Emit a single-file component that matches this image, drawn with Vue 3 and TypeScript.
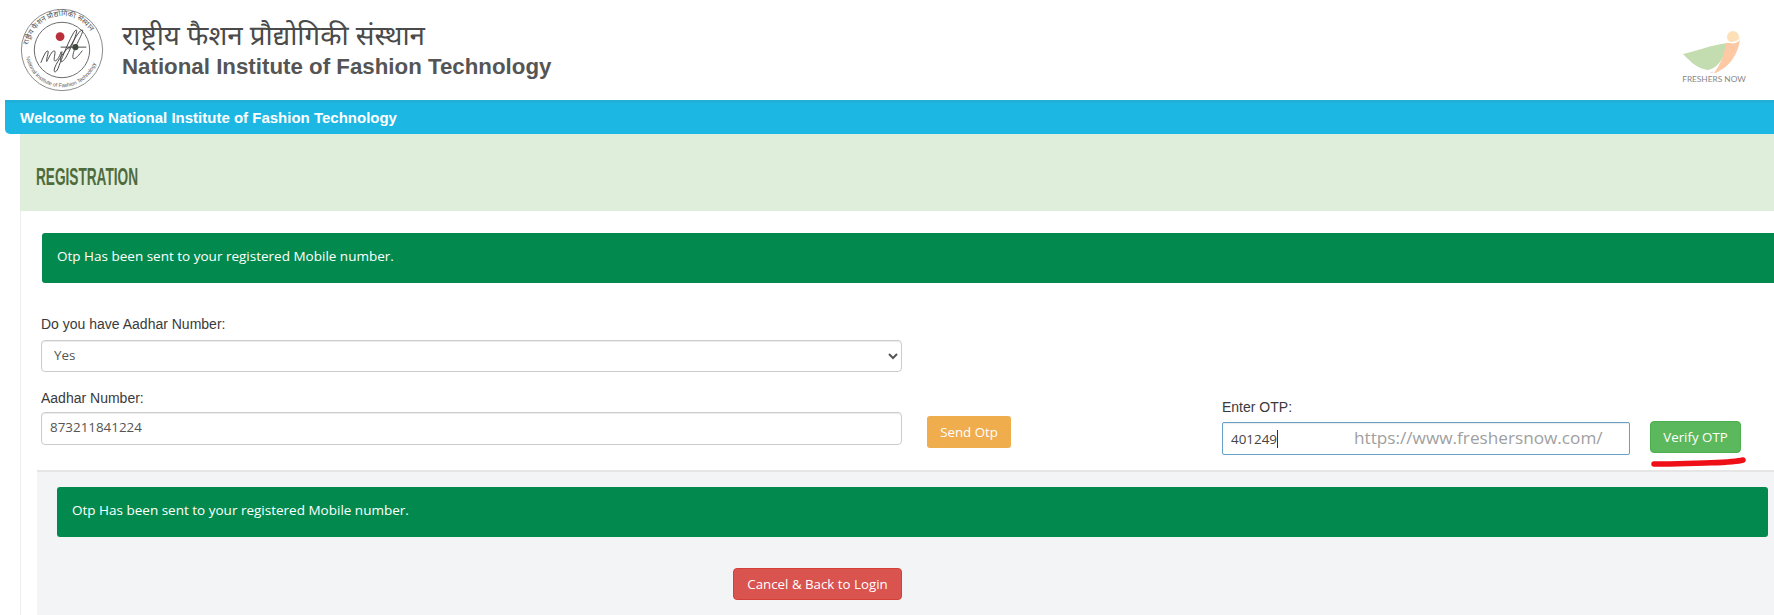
<script setup lang="ts">
const message: string = 'Otp Has been sent to your registered Mobile number.'
</script>

<template>
  <div class="page">
    <header class="top">
      <svg class="nift" viewBox="0 0 90 90" width="86" height="86" role="img" aria-label="NIFT logo">
        <defs>
          <path id="arcTop" d="M10 40 A35.5 35.5 0 0 1 80.5 42" />
          <path id="arcBot" d="M7.5 52 A38 38 0 0 0 82.5 52" />
        </defs>
        <circle cx="45" cy="45" r="42.5" fill="none" stroke="#666" stroke-width="0.8" />
        <circle cx="45" cy="45" r="29" fill="none" stroke="#555" stroke-width="0.9" />
        <text class="ring" font-size="7.8"><textPath href="#arcTop">राष्ट्रीय फैशन प्रौद्योगिकी संस्थान</textPath></text>
        <text class="ring" font-size="5.6"><textPath href="#arcBot">National Institute of Fashion Technology</textPath></text>
        <circle cx="43" cy="31" r="4.6" fill="#b8303c" />
        <circle cx="59" cy="42" r="3.2" fill="#3c4d3c" />
        <path d="M23 58c3-7 5-12 7-12 2 0-2 9-1 11 3-5 5-11 8-11 2 0-1 8 0 10 1 2 5-2 7-9M45 47c-1 4-2 9-1 10 1 1 4-2 6-6C56 40 62 24 60 24 57 24 46 50 41 64 39 69 36 69 37 65 38 60 46 48 52 42M52 44c4-6 10-19 14-20 2 0-1 6-5 14-3 6-6 14-4 16 2 1 6-4 9-8M44 42H70" fill="none" stroke="#444" stroke-width="1" stroke-linecap="round" />
      </svg>
      <div class="names">
        <div class="hindi">राष्ट्रीय फैशन प्रौद्योगिकी संस्थान</div>
        <div class="english">National Institute of Fashion Technology</div>
      </div>
      <div class="fn">
        <svg viewBox="0 0 62 50" width="62" height="50" aria-hidden="true">
          <path d="M0 31C14 28 28 22 44 20c-2 13-8 25-19 27C14 46 7 38 0 31z" fill="#c3dcb0" />
          <path d="M43 20c6 0 10-2 14-5-1 13-8 29-27 36 7-8 11-18 13-31z" fill="#fcc9a4" />
          <circle cx="50" cy="14" r="6" fill="#fde0b8" />
          <path d="M44 18c5 3 9 2 13-2" stroke="#fff" stroke-width="1.4" fill="none" />
          <path d="M18 54l12-5" stroke="#ddd" stroke-width="1" fill="none" />
        </svg>
        <span class="fn-text">FRESHERS NOW</span>
      </div>
    </header>

    <div class="bar">Welcome to National Institute of Fashion Technology</div>

    <main class="main">
      <div class="title-band"><h1 class="title">REGISTRATION</h1></div>

      <div class="alert alert-first">{{ message }}</div>

      <div class="form">
        <label class="label" for="has">Do you have Aadhar Number:</label>
        <select id="has" class="control select">
          <option>Yes</option>
        </select>

        <div class="row">
          <div class="aadhar">
            <label class="label" for="num">Aadhar Number:</label>
            <input id="num" class="control" value="873211841224" />
          </div>
          <button class="btn send" type="button">Send Otp</button>
          <div class="otp">
            <label class="label otp-label" for="otp">Enter OTP:</label>
            <div class="otp-field">
              <input id="otp" class="control focus" value="401249" />
              <span class="caret"></span>
              <span class="mark">https://www.freshersnow.com/</span>
            </div>
          </div>
          <div class="verify-wrap">
            <button class="btn verify" type="button">Verify OTP</button>
            <svg class="scribble" viewBox="0 0 98 10" width="98" height="10" aria-hidden="true">
              <path d="M3 7C25 7.4 40 6.4 60 5.8c12-.4 26-1 32-2.8" fill="none" stroke="#ee0f17" stroke-width="5.5" stroke-linecap="round" />
            </svg>
          </div>
        </div>
      </div>

      <section class="foot">
        <div class="alert alert-second">{{ message }}</div>
        <div class="foot-actions">
          <button class="btn cancel" type="button">Cancel &amp; Back to Login</button>
        </div>
      </section>
    </main>
  </div>
</template>

<style>
html, body { margin: 0; background: #fff; overflow: hidden; }
</style>

<style scoped>
.page {
  width: 1774px;
  height: 615px;
  overflow: hidden;
  font-family: "Open Sans", "Liberation Sans", sans-serif;
  color: #333;
}
.top {
  height: 100px;
  display: flex;
  align-items: flex-start;
  box-sizing: border-box;
  padding: 7px 0 0 19px;
}
.ring { font-family: "Liberation Sans", sans-serif; fill: #555; }
.names { margin-left: 17px; padding-top: 16px; }
.hindi {
  font-family: "Noto Sans Devanagari", "Noto Sans", "DejaVu Sans", sans-serif;
  font-size: 27.7px;
  line-height: 30px;
  color: #4a4a4a;
}
.english {
  font-family: "Liberation Sans", Arial, sans-serif;
  font-weight: 700;
  font-size: 22.3px;
  line-height: 28px;
  color: #555;
}
.fn {
  margin-left: auto;
  margin-right: 29px;
  padding-top: 16px;
  width: 62px;
  display: flex;
  flex-direction: column;
  align-items: center;
}
.fn-text {
  font-family: Lato, "Liberation Sans", sans-serif;
  font-size: 8.3px;
  line-height: 12px;
  color: #888;
  white-space: nowrap;
}
.bar {
  height: 34px;
  margin-left: 5px;
  background: #1db7e4;
  border-top: 3px solid #20afd6;
  box-sizing: border-box;
  border-bottom-left-radius: 5px;
  padding-left: 15px;
  font-family: "Liberation Sans", Arial, sans-serif;
  font-weight: 700;
  font-size: 15px;
  line-height: 30px;
  color: #fff;
}
.main {
  margin-left: 20px;
  border-left: 1px solid #eeeeee;
  box-sizing: border-box;
}
.title-band {
  height: 77px;
  margin-left: -1px;
  background: #deeeda;
  padding: 8px 0 0 16px;
  box-sizing: border-box;
  display: flex;
  align-items: center;
}
.title {
  margin: 0;
  font-family: "Liberation Sans", Arial, sans-serif;
  font-weight: 700;
  font-size: 24px;
  line-height: 30px;
  color: #4f6b3c;
  transform: scaleX(0.568);
  transform-origin: left center;
  white-space: nowrap;
}
.alert {
  height: 50px;
  background: #028a4e;
  border-radius: 3px;
  color: #fff;
  font-size: 13.5px;
  line-height: 46px;
  box-sizing: border-box;
  padding-left: 15px;
}
.alert-first {
  margin: 22px 0 0 21px;
  border-radius: 3px 0 0 3px;
}
.form { margin: 32px 0 0 20px; }
.label {
  display: block;
  font-family: "Liberation Sans", Arial, sans-serif;
  font-size: 14px;
  line-height: 18px;
  color: #3a3a3a;
}
.control {
  display: block;
  box-sizing: border-box;
  width: 861px;
  height: 33px;
  margin-top: 7px;
  padding: 0 8px 3px;
  border: 1px solid #ccc;
  border-radius: 4px;
  background: #fff;
  box-shadow: inset 0 1px 1px rgba(0, 0, 0, 0.08);
  font-family: "Open Sans", "Liberation Sans", sans-serif;
  font-size: 13.4px;
  color: #555;
  outline: none;
}
.select { height: 32px; }
.row {
  display: flex;
  align-items: flex-start;
  margin-top: 17px;
  padding-bottom: 15px;
}
.aadhar { width: 861px; flex: none; }
.aadhar .control { margin-top: 5px; }
.btn {
  box-sizing: border-box;
  border: 1px solid transparent;
  border-radius: 3px;
  color: #fff;
  font-family: "Open Sans", "Liberation Sans", sans-serif;
  font-size: 13.3px;
  padding: 0;
  height: 32px;
  flex: none;
}
.send {
  width: 84px;
  margin: 27px 0 0 25px;
  background: #f0ad4e;
}
.otp { margin: 9px 0 0 211px; width: 408px; flex: none; }
.otp-field { position: relative; margin-top: 6px; }
.otp-field .control {
  width: 408px;
  margin: 0;
  padding-bottom: 0;
  border-radius: 2px;
  border-color: #66a0c8;
  color: #444;
}
.caret {
  position: absolute;
  left: 55px;
  top: 8px;
  width: 1px;
  height: 18px;
  background: #333;
}
.mark {
  position: absolute;
  left: 132px;
  top: 3px;
  font-size: 17.2px;
  line-height: 26px;
  color: #a0a0a0;
  white-space: nowrap;
  pointer-events: none;
}
.verify-wrap { position: relative; margin: 32px 0 0 20px; }
.verify {
  display: block;
  width: 91px;
  background: #5cb85c;
  border-color: #4cae4c;
  border-radius: 4px;
}
.scribble {
  position: absolute;
  left: 1px;
  top: 36px;
}
.foot {
  margin-left: 16px;
  min-height: 150px;
  background: #f3f4f5;
  border-top: 2px solid #e6e6e6;
  box-sizing: border-box;
  padding: 15px 6px 0 20px;
}
.foot-actions {
  margin-top: 31px;
  width: 845px;
  display: flex;
  justify-content: flex-end;
}
.cancel {
  width: 169px;
  background: #d9534f;
  border-color: #d43f3a;
  border-radius: 4px;
}
</style>
